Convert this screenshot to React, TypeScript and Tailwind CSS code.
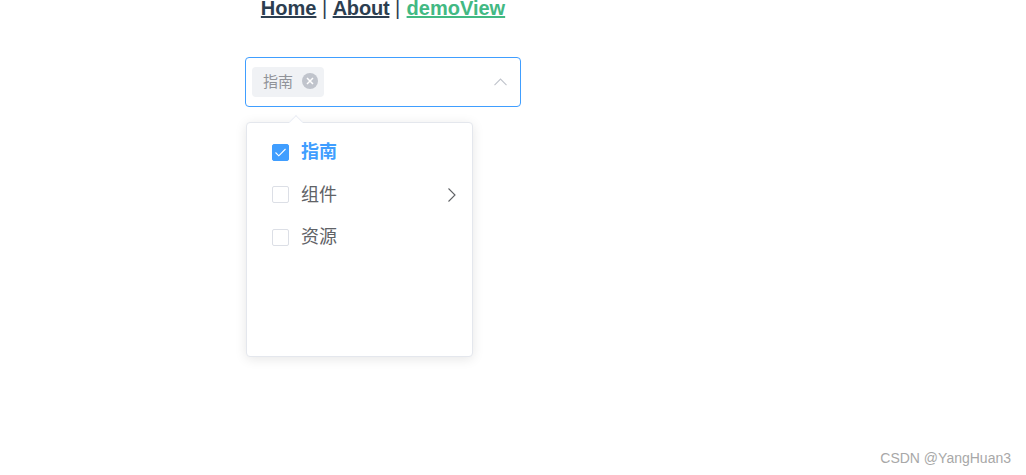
import React from "react";

const Check = ({ on }: { on?: boolean }) => (
  <span className={"flex h-[17px] w-[17px] items-center justify-center rounded-[2px] border " + (on ? "border-[#409eff] bg-[#409eff]" : "border-[#dcdfe6] bg-white")}>
    {on && (
      <svg width="13" height="11" viewBox="0 0 13 11" fill="none">
        <path d="M1.5 5.5 L4.8 8.8 L11.5 2" stroke="#fff" strokeWidth="1.1" />
      </svg>
    )}
  </span>
);

const Row = ({ label, on, arrow }: { label: string; on?: boolean; arrow?: boolean }) => (
  <div className="flex h-[42.5px] items-center pl-[25px] pr-[15px]">
    <Check on={on} />
    <span className={"ml-3 pt-px text-[18px] " + (on ? "font-bold text-[#409eff]" : "text-[#606266]")}>{label}</span>
    {arrow && (
      <svg className="ml-auto" width="10" height="16" viewBox="0 0 10 16" fill="none">
        <path d="M1.5 1.5 L8 8 L1.5 14.5" stroke="#606266" strokeWidth="1.1" />
      </svg>
    )}
  </div>
);

export default function App() {
  return (
    <div className="relative h-[475px] w-[1026px] overflow-hidden bg-white font-['Liberation_Sans','Noto_Sans_CJK_SC',sans-serif]">
      <div className="ml-[245px] w-[276px]">
        <nav className="flex h-[57px] justify-center gap-[5.5px] text-[20px] leading-[17px] text-[#2c3e50]">
          <a className="font-bold underline">Home</a>
          <span>|</span>
          <a className="font-bold tracking-[-0.2px] underline">About</a>
          <span>|</span>
          <a className="ml-px font-bold text-[#42b983] underline">demoView</a>
        </nav>
        <div className="relative">
          <div className="flex h-[50px] items-center rounded-[4px] border border-[#409eff] pl-[6px] pr-[13px]">
            <div className="flex h-[30px] w-[72px] items-center rounded-[4px] bg-[#f0f2f5] pl-[11px] text-[15px] text-[#909399]">
              <span className="pt-px">指南</span>
              <span className="mb-[3px] ml-[9px] flex h-4 w-4 items-center justify-center rounded-full bg-[#c0c4cc]">
                <svg width="8" height="8" viewBox="0 0 8 8" fill="none">
                  <path d="M1 1 L7 7 M7 1 L1 7" stroke="#fff" strokeWidth="1.5" />
                </svg>
              </span>
            </div>
            <svg className="ml-auto" width="13" height="8" viewBox="0 0 13 8" fill="none">
              <path d="M0.5 7.2 L6.5 1 L12.5 7.2" stroke="#c0c4cc" strokeWidth="1.1" />
            </svg>
          </div>
          <div className="absolute left-px top-[65px] h-[235px] w-[227px] rounded-[4px] border border-[#e4e7ed] bg-white py-2 shadow-[0_2px_12px_0_rgba(0,0,0,0.1)]">
            <div className="absolute left-[44px] top-[-6px] h-[10px] w-[10px] rotate-45 border-l border-t border-[#ebeef5] bg-white" />
            <div className="relative">
              <Row label="指南" on />
              <Row label="组件" arrow />
              <Row label="资源" />
            </div>
          </div>
        </div>
      </div>
      <div className="absolute right-[15px] top-[449px] text-[14px] leading-[18px] text-[#a8a8a8]">CSDN @YangHuan3</div>
    </div>
  );
}
